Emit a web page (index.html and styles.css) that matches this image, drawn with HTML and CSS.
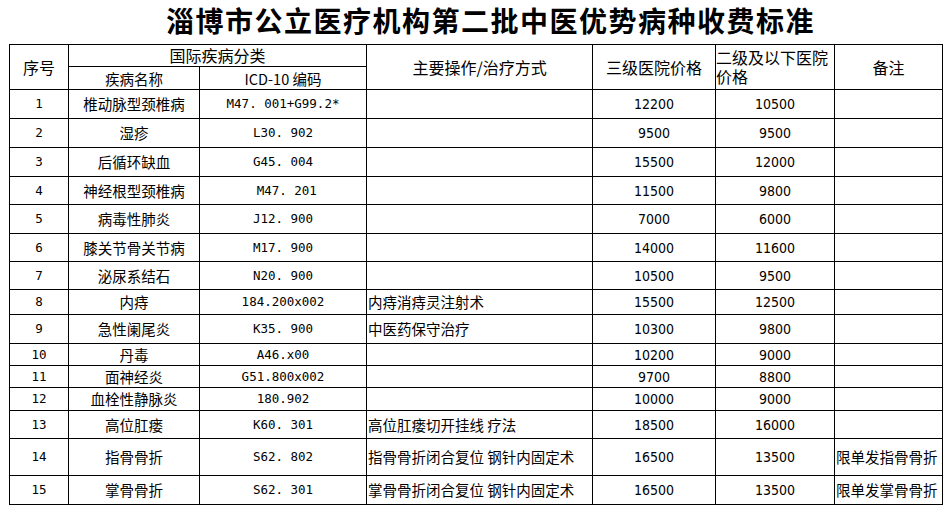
FILE: index.html
```html
<!DOCTYPE html>
<html lang="zh-CN">
<head>
<meta charset="utf-8">
<title>淄博市公立医疗机构第二批中医优势病种收费标准</title>
<link rel="stylesheet" href="styles.css">
</head>
<body>
<h1 class="title">淄博市公立医疗机构第二批中医优势病种收费标准</h1>
<div class="wrap">
<table class="fee">
  <colgroup>
    <col class="c-no"><col class="c-name"><col class="c-icd"><col class="c-op"><col class="c-p3"><col class="c-p2"><col class="c-note">
  </colgroup>
  <thead>
    <tr class="h22">
      <th rowspan="2">序号</th>
      <th colspan="2">国际疾病分类</th>
      <th rowspan="2">主要操作/治疗方式</th>
      <th rowspan="2">三级医院价格</th>
      <th rowspan="2" class="wrapcell">二级及以下医院价格</th>
      <th rowspan="2">备注</th>
    </tr>
    <tr class="h23">
      <th class="sub">疾病名称</th>
      <th class="sub">ICD-10 编码</th>
    </tr>
  </thead>
  <tbody>
    <tr class="h29"><td class="no">1</td><td class="nm">椎动脉型颈椎病</td><td class="icd">M47. 001+G99.2*</td><td class="op"></td><td class="pr">12200</td><td class="pr">10500</td><td class="nt"></td></tr>
    <tr class="h29"><td class="no">2</td><td class="nm">湿疹</td><td class="icd">L30. 902</td><td class="op"></td><td class="pr">9500</td><td class="pr">9500</td><td class="nt"></td></tr>
    <tr class="h29"><td class="no">3</td><td class="nm">后循环缺血</td><td class="icd">G45. 004</td><td class="op"></td><td class="pr">15500</td><td class="pr">12000</td><td class="nt"></td></tr>
    <tr class="h28"><td class="no">4</td><td class="nm">神经根型颈椎病</td><td class="icd"> M47. 201</td><td class="op"></td><td class="pr">11500</td><td class="pr">9800</td><td class="nt"></td></tr>
    <tr class="h29"><td class="no">5</td><td class="nm">病毒性肺炎</td><td class="icd">J12. 900</td><td class="op"></td><td class="pr">7000</td><td class="pr">6000</td><td class="nt"></td></tr>
    <tr class="h28"><td class="no">6</td><td class="nm">膝关节骨关节病</td><td class="icd">M17. 900</td><td class="op"></td><td class="pr">14000</td><td class="pr">11600</td><td class="nt"></td></tr>
    <tr class="h28"><td class="no">7</td><td class="nm">泌尿系结石</td><td class="icd">N20. 900</td><td class="op"></td><td class="pr">10500</td><td class="pr">9500</td><td class="nt"></td></tr>
    <tr class="h25"><td class="no">8</td><td class="nm">内痔</td><td class="icd">184.200x002</td><td class="op">内痔消痔灵注射术</td><td class="pr">15500</td><td class="pr">12500</td><td class="nt"></td></tr>
    <tr class="h29"><td class="no">9</td><td class="nm">急性阑尾炎</td><td class="icd">K35. 900</td><td class="op">中医药保守治疗</td><td class="pr">10300</td><td class="pr">9800</td><td class="nt"></td></tr>
    <tr class="h22"><td class="no">10</td><td class="nm">丹毒</td><td class="icd">A46.x00</td><td class="op"></td><td class="pr">10200</td><td class="pr">9000</td><td class="nt"></td></tr>
    <tr class="h22"><td class="no">11</td><td class="nm">面神经炎</td><td class="icd">G51.800x002</td><td class="op"></td><td class="pr">9700</td><td class="pr">8800</td><td class="nt"></td></tr>
    <tr class="h23"><td class="no">12</td><td class="nm">血栓性静脉炎</td><td class="icd">180.902</td><td class="op"></td><td class="pr">10000</td><td class="pr">9000</td><td class="nt"></td></tr>
    <tr class="h28"><td class="no">13</td><td class="nm">高位肛瘘</td><td class="icd">K60. 301</td><td class="op">高位肛瘘切开挂线 疗法</td><td class="pr">18500</td><td class="pr">16000</td><td class="nt"></td></tr>
    <tr class="h37"><td class="no">14</td><td class="nm">指骨骨折</td><td class="icd">S62. 802</td><td class="op">指骨骨折闭合复位 钢针内固定术</td><td class="pr">16500</td><td class="pr">13500</td><td class="nt">限单发指骨骨折</td></tr>
    <tr class="h29"><td class="no">15</td><td class="nm">掌骨骨折</td><td class="icd">S62. 301</td><td class="op">掌骨骨折闭合复位 钢针内固定术</td><td class="pr">16500</td><td class="pr">13500</td><td class="nt">限单发掌骨骨折</td></tr>
  </tbody>
</table>
</div>
</body>
</html>
```

FILE: styles.css
```css
html, body {
  margin: 0;
  padding: 0;
  background: #fff;
  color: #000;
}

body {
  font-family: "Noto Sans CJK SC", "Noto Sans", sans-serif;
}

.title {
  margin: 0;
  height: 44px;
  padding-left: 30px;
  font-family: "Noto Sans CJK SC", sans-serif;
  font-size: 28px;
  font-weight: 700;
  line-height: 41px;
  letter-spacing: 1.5px;
  text-align: center;
  white-space: nowrap;
  color: #000;
}

.wrap {
  padding-left: 9px;
}

.fee {
  border-collapse: collapse;
  table-layout: fixed;
  width: 934px;
}

.c-no { width: 59px; }
.c-name { width: 131px; }
.c-icd { width: 167px; }
.c-op { width: 226px; }
.c-p3 { width: 123px; }
.c-p2 { width: 119px; }
.c-note { width: 108px; }

.fee th,
.fee td {
  border: 1px solid #000;
  padding: 0 1px;
  vertical-align: middle;
  overflow: hidden;
  white-space: nowrap;
}

.fee th {
  font-weight: 400;
  font-size: 16px;
  line-height: 19px;
  text-align: center;
}

.fee th.sub {
  font-size: 14.5px;
}

.fee th.wrapcell {
  white-space: normal;
  text-align: left;
  padding: 0;
  word-break: break-all;
}

.h22 { height: 22px; }
.h23 { height: 23px; }
.h25 { height: 25px; }
.h28 { height: 28px; }
.h29 { height: 29px; }
.h37 { height: 37px; }

.fee td {
  font-size: 14.5px;
  line-height: 18px;
}

.fee td.no,
.fee td.icd {
  font-family: "DejaVu Sans Mono", "Liberation Mono", monospace;
  font-size: 12.5px;
  text-align: center;
  white-space: pre;
}

.fee td.nm {
  text-align: center;
}

.fee td.op,
.fee td.nt {
  text-align: left;
  white-space: pre;
}

.fee td.pr {
  font-family: "Liberation Sans Narrow", "DejaVu Sans Condensed", sans-serif;
  font-size: 14px;
  text-align: center;
}
```
